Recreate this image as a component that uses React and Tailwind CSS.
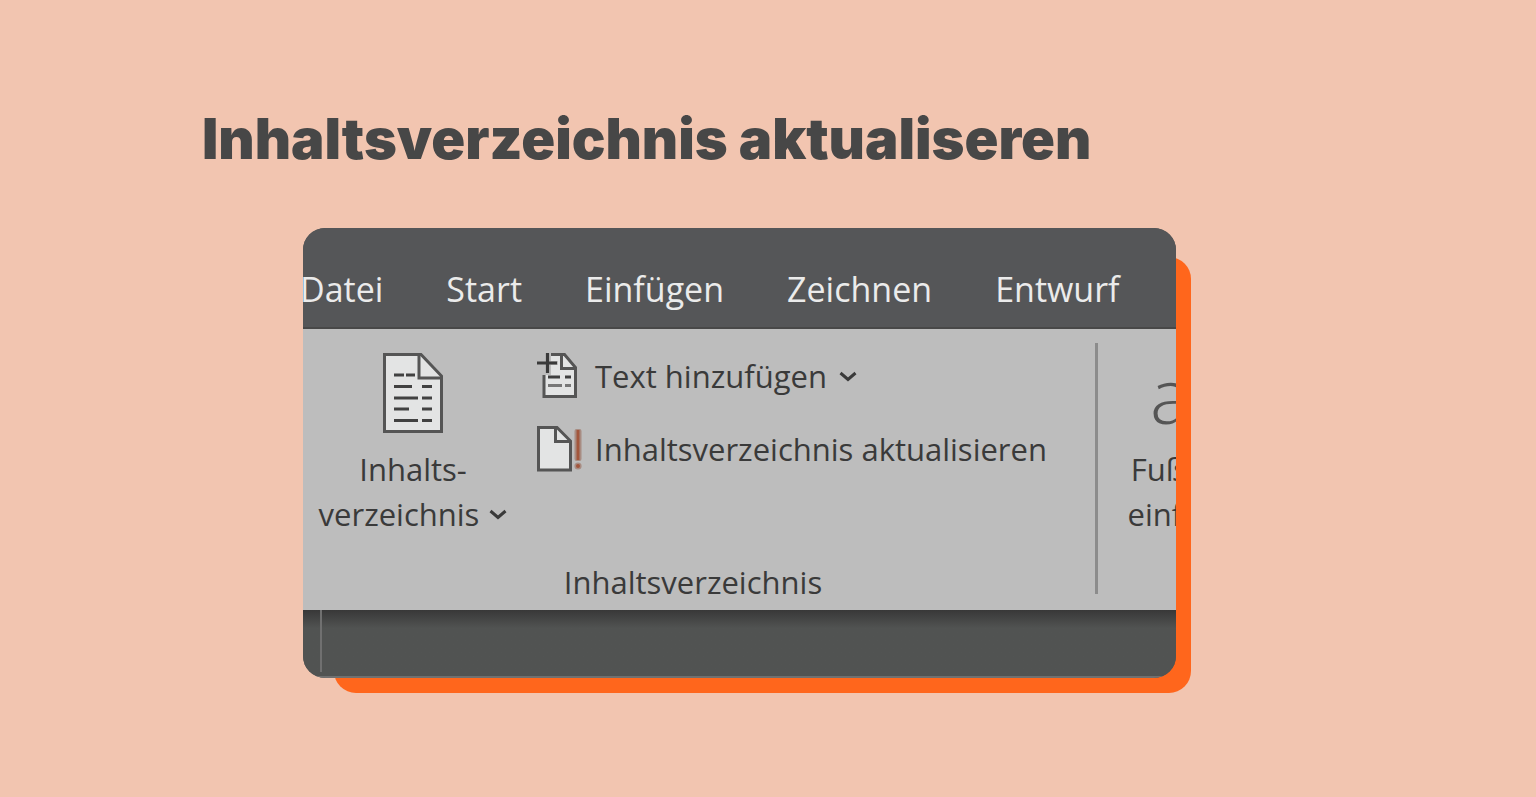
const tabs = ["Datei", "Start", "Einfügen", "Zeichnen", "Entwurf"];

function Chevron() {
  return (
    <svg viewBox="0 0 18 11" className="h-[11px] w-[18px] shrink-0" fill="none" aria-hidden="true">
      <path d="M1.500 2 9 8.500 16.500 2" stroke="#3a3a3a" strokeWidth="3" />
    </svg>
  );
}

function ContentsIcon() {
  return (
    <svg viewBox="0 0 60 80" className="h-20 w-[60px]" fill="none" aria-hidden="true">
      <path d="M1.5 1.5H38L58.500 23V78.500H1.500Z" fill="#e3e4e4" stroke="#555" strokeWidth="3" />
      <path d="M36 2V25H58" stroke="#555" strokeWidth="3" />
      <path
        d="M11 22H21M23 22H32M11 33.500H29M39 33.500H49M11 45H35M39 45H49M11 56H26M39 56H49M11 67.500H35M39 67.500H49"
        stroke="#414141"
        strokeWidth="3.200"
      />
    </svg>
  );
}

function AddTextIcon() {
  return (
    <svg viewBox="0 0 46 46" className="h-[46px] w-[46px]" fill="none" aria-hidden="true">
      <path d="M7 22H14V2H27.500L38.500 14.500V43.500H7Z" fill="#e3e4e4" />
      <path d="M14 1.500H27.500L38.500 14.500V43.500H7V22" stroke="#555" strokeWidth="3" />
      <path d="M24.500 2V15.500H38" stroke="#555" strokeWidth="3" />
      <path d="M8 3H13V8H21V12H13V20H8Z" fill="#bdbdbd" />
      <path d="M10.500 0V20M0 10H20" stroke="#3a3a3a" strokeWidth="3.200" />
      <path d="M11 24H23M28 24H34" stroke="#3f3f3f" strokeWidth="3" />
      <path d="M11 32.500H25M28 32.500H34" stroke="#777" strokeWidth="3" />
    </svg>
  );
}

function UpdateIcon() {
  return (
    <svg viewBox="0 0 46 46" className="h-[46px] w-[46px]" fill="none" aria-hidden="true">
      <path d="M1.500 1.500H20L33.500 15V44H1.500Z" fill="#e3e4e4" stroke="#555" strokeWidth="3" />
      <path d="M18.500 2V15.500H33" stroke="#555" strokeWidth="3" />
      <rect x="37.500" y="3" width="7" height="32" rx="2" fill="#a88c82" />
      <rect x="39.500" y="4" width="3" height="30" fill="#a2563c" />
      <circle cx="41" cy="40" r="3.600" fill="#a88c82" />
      <circle cx="41" cy="40" r="2" fill="#a2563c" />
    </svg>
  );
}

export default function App() {
  return (
    <main className="min-h-screen bg-[#f2c5b0] pb-28 pt-[102px] font-['Open_Sans',sans-serif]">
      <h1 className="ml-[202px] whitespace-nowrap font-['Inter',sans-serif] text-[56px] font-black leading-[74px] text-[#474747]">
        Inhaltsverzeichnis aktualiseren
      </h1>

      <div className="relative isolate ml-[303px] mr-[360px] mt-[52px]">
        <div className="absolute -bottom-[15px] -right-[15px] left-[31px] top-[29px] -z-10 rounded-[22px] bg-[#ff661c]" />
        <section className="overflow-hidden rounded-[22px] bg-[#515352] text-[#3a3a3a]">
          <nav className="flex h-[101px] items-center gap-[66px] border-b-2 border-[#484848] bg-[#555658] pt-[22px]">
            {tabs.map((tab) => (
              <button key={tab} type="button" className="-ml-[3px] whitespace-nowrap text-[34px] leading-[44px] text-[#ebebeb]">
                {tab}
              </button>
            ))}
          </nav>

          <div className="flex h-[281px] bg-[#bdbdbd]">
            <div className="flex w-[792px] shrink-0 flex-col justify-between">
              <div className="flex pt-6">
                <button type="button" className="ml-3 flex w-[196px] shrink-0 flex-col items-center text-[31px] leading-[45px]">
                  <ContentsIcon />
                  <span className="mt-[14px]">Inhalts-</span>
                  <span className="flex items-center gap-[10px]">
                    verzeichnis
                    <Chevron />
                  </span>
                </button>
                <div className="ml-[26px] flex flex-col items-start gap-[27px] text-[31px] leading-[46px]">
                  <button type="button" className="flex items-center gap-3 whitespace-nowrap">
                    <AddTextIcon />
                    Text hinzufügen
                    <Chevron />
                  </button>
                  <button type="button" className="flex items-center gap-3 whitespace-nowrap">
                    <UpdateIcon />
                    Inhaltsverzeichnis aktualisieren
                  </button>
                </div>
              </div>
              <h2 className="pb-2 pr-3 text-center text-[31px] leading-[40px]">Inhaltsverzeichnis</h2>
            </div>
            <div className="mb-4 mt-[14px] w-[3px] shrink-0 bg-[#8c8c8c]" />
            <button type="button" className="ml-7 flex w-[130px] shrink-0 flex-col items-center text-[31px] leading-[45px]">
              <span className="mt-[22px] h-24 self-start pl-6 text-[76px] font-light leading-[88px] text-[#555]">a</span>
              <span>Fußnote</span>
              <span>einfügen</span>
            </button>
          </div>

          <div className="h-[68px] border-b-2 border-[#707070] bg-linear-to-b from-[#383838] to-[#515352] to-[18px] pl-[17px]">
            <div className="h-[62px] w-[2px] bg-[#707070]" />
          </div>
        </section>
      </div>
    </main>
  );
}
